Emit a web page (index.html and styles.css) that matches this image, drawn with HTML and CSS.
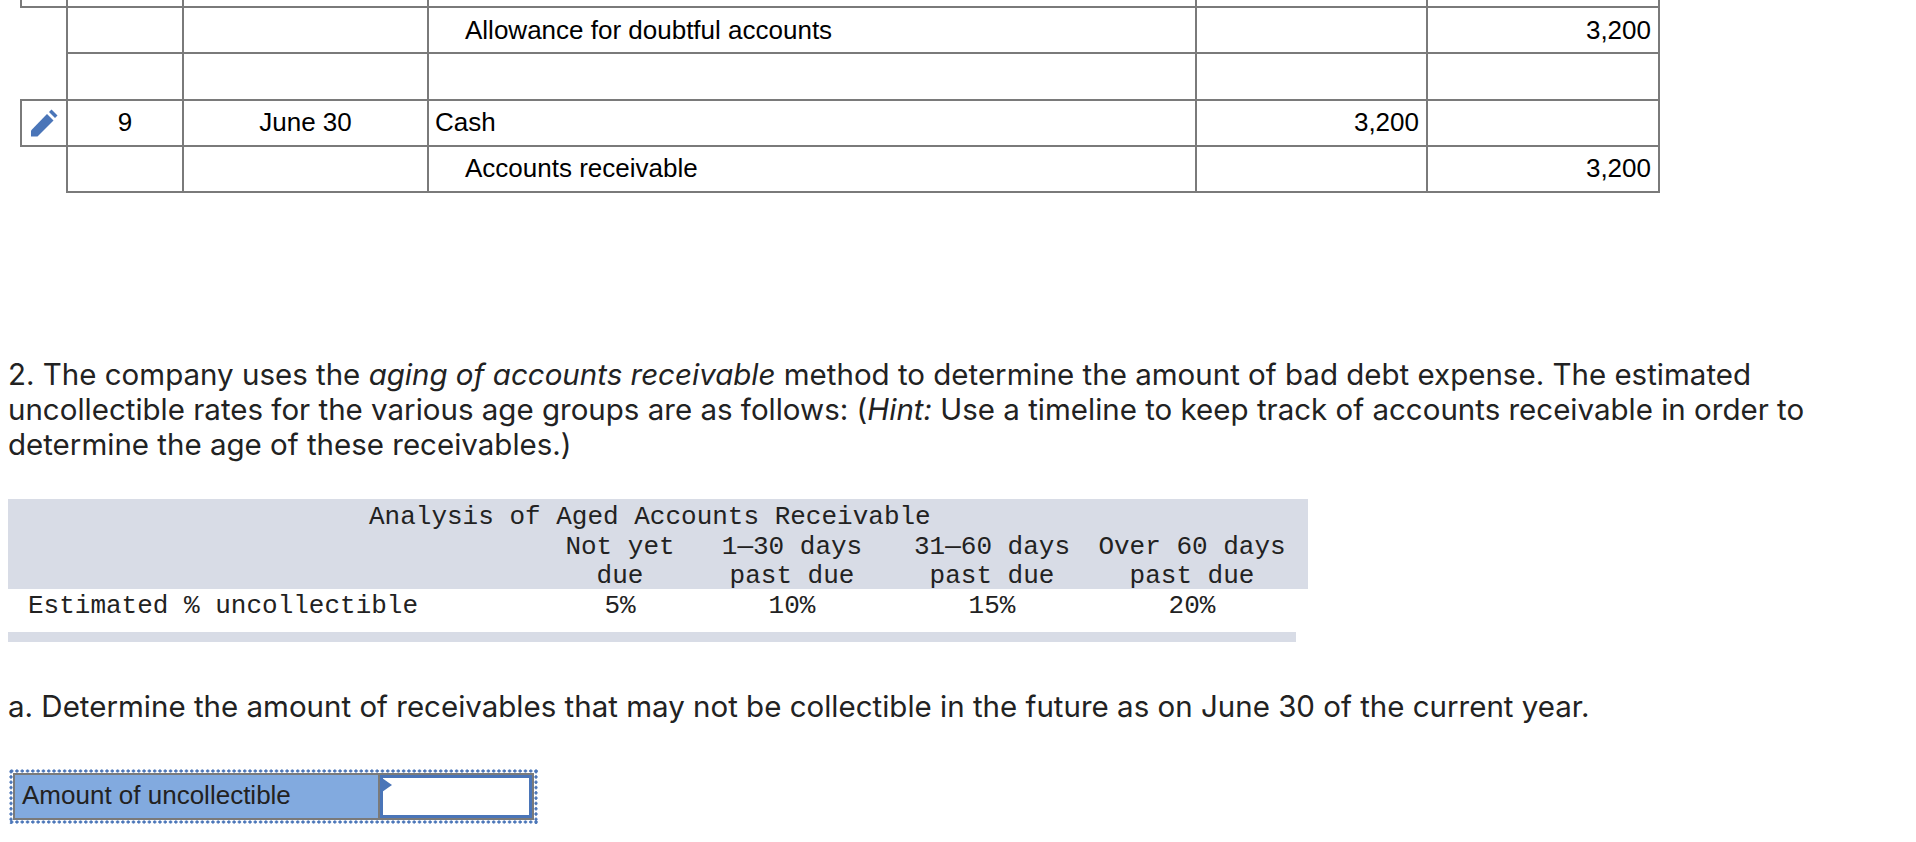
FILE: index.html
```html
<!DOCTYPE html>
<html lang="en">
<head>
<meta charset="utf-8">
<title>Aging of accounts receivable</title>
<link rel="stylesheet" href="styles.css">
</head>
<body>
<table class="journal">
  <colgroup>
    <col class="c-edit"><col class="c-no"><col class="c-date"><col class="c-acct"><col class="c-dr"><col class="c-cr">
  </colgroup>
  <tr class="stub"><td class="edit"></td><td class="cell"></td><td class="cell"></td><td class="cell"></td><td class="cell"></td><td class="cell"></td></tr>
  <tr class="row"><td></td><td class="cell"></td><td class="cell"></td><td class="cell indent">Allowance for doubtful accounts</td><td class="cell"></td><td class="cell num">3,200</td></tr>
  <tr class="row"><td></td><td class="cell"></td><td class="cell"></td><td class="cell"></td><td class="cell"></td><td class="cell"></td></tr>
  <tr class="row"><td class="edit"><svg class="pencil" viewBox="11 8 27 28" aria-hidden="true"><path d="M11 29.500L27 13l6.500 6.500-16 16H11z" fill="#4a75b8"/><path d="M29 11l2.500-2.500 6 6L35 17z" fill="#4a75b8"/></svg></td><td class="cell center">9</td><td class="cell center">June 30</td><td class="cell acct">Cash</td><td class="cell num">3,200</td><td class="cell"></td></tr>
  <tr class="row"><td></td><td class="cell"></td><td class="cell"></td><td class="cell indent">Accounts receivable</td><td class="cell"></td><td class="cell num">3,200</td></tr>
</table>

<p class="question">2. The company uses the <em>aging of accounts receivable</em> method to determine the amount of bad debt expense. The estimated uncollectible rates for the various age groups are as follows: (<em>Hint:</em> Use a timeline to keep track of accounts receivable in order to determine the age of these receivables.)</p>

<div class="aging">
  <div class="aging-head">
    <div class="aging-title">Analysis of Aged Accounts Receivable</div>
    <div class="aging-cols">
      <div class="a-label"></div>
      <div class="a-c1">Not yet<br>due</div>
      <div class="a-c2">1—30 days<br>past due</div>
      <div class="a-c3">31—60 days<br>past due</div>
      <div class="a-c4">Over 60 days<br>past due</div>
    </div>
  </div>
  <div class="aging-cols aging-body">
    <div class="a-label">Estimated % uncollectible</div>
    <div class="a-c1">5%</div>
    <div class="a-c2">10%</div>
    <div class="a-c3">15%</div>
    <div class="a-c4">20%</div>
  </div>
  <div class="aging-foot"></div>
</div>

<p class="sub">a. Determine the amount of receivables that may not be collectible in the future as on June 30 of the current year.</p>

<div class="answer">
  <div class="answer-inner">
    <div class="answer-label">Amount of uncollectible</div>
    <div class="answer-input"><span class="marker"></span></div>
  </div>
</div>
</body>
</html>
```
FILE: styles.css
```css
* { box-sizing: border-box; }
html, body { margin: 0; padding: 0; background: #fff; overflow: hidden; }
body { width: 1916px; height: 842px; color: #000; font-family: "Liberation Sans", Arial, sans-serif; }

.journal {
  margin-left: 20px;
  width: 1639px;
  table-layout: fixed;
  border-collapse: collapse;
  font-size: 26px;
}
.c-edit { width: 46px; }
.c-no { width: 116px; }
.c-date { width: 245px; }
.c-acct { width: 768px; }
.c-dr { width: 231px; }
.c-cr { width: 232px; }
.journal td { padding: 0; height: 46.250px; }
.journal .stub td { height: 7px; border-top: 0; }
.cell { border: 2px solid #7a7a7a; }
.edit { border: 2px solid #7a7a7a; text-align: center; vertical-align: middle; }
.journal .stub .edit { height: 5px; border-top: 0; }
.center { text-align: center; }
.indent { padding-left: 36px !important; }
.acct { padding-left: 6px !important; }
.num { text-align: right; padding-right: 7px !important; }
.pencil { display: block; width: 27px; height: 28px; margin: 0 auto; }

.question {
  margin: 164px 0 0 8px;
  width: 1815px;
  font-family: Inter, "Liberation Sans", sans-serif;
  font-size: 29.500px;
  line-height: 35px;
  color: #222;
}
.question em { font-style: italic; }

.aging {
  margin: 37px 0 0 8px;
  width: 1300px;
  font-family: "Liberation Mono", "Courier New", monospace;
  font-size: 26px;
  line-height: 29.600px;
  color: #222;
}
.aging-head { background: #d8dce6; height: 90px; padding-top: 4px; }
.aging-title { padding-left: 361px; }
.aging-cols { display: grid; grid-template-columns: 530px 164px 180px 200px 220px; text-align: center; }
.aging-cols .a-c3 { padding-left: 20px; }
.aging-body { height: 43px; padding-top: 3px; }
.aging-body .a-label { text-align: left; padding-left: 20px; }
.aging-foot { width: 1288px; height: 10px; background: #d8dce6; }

.sub {
  margin: 46px 0 0 8px;
  font-family: Inter, "Liberation Sans", sans-serif;
  font-size: 29.500px;
  line-height: 36px;
  color: #222;
}

.answer {
  margin: 45px 0 0 9px;
  width: 529px;
  height: 55px;
  padding: 4px;
  background:
    radial-gradient(circle, #4a75b8 1.300px, transparent 1.900px) 0 0 / 5.300px 4px repeat-x,
    radial-gradient(circle, #4a75b8 1.300px, transparent 1.900px) 0 100% / 5.300px 4px repeat-x,
    radial-gradient(circle, #4a75b8 1.300px, transparent 1.900px) 0 0 / 4px 5.300px repeat-y,
    radial-gradient(circle, #4a75b8 1.300px, transparent 1.900px) 100% 0 / 4px 5.300px repeat-y;
}
.answer-inner { display: flex; height: 100%; border: 2px solid #7a7a7a; font-size: 26px; }
.answer-label { width: 365px; background: #82aadf; padding: 5px 0 0 7px; color: #222; border-right: 2px solid #7a7a7a; }
.answer-input { position: relative; flex: 1; background: #fff; border: 3px solid #4a75b8; }
.marker { position: absolute; left: -1px; top: 0; width: 0; height: 0; border-left: 10px solid #4a75b8; border-top: 7px solid transparent; border-bottom: 7px solid transparent; }
```
